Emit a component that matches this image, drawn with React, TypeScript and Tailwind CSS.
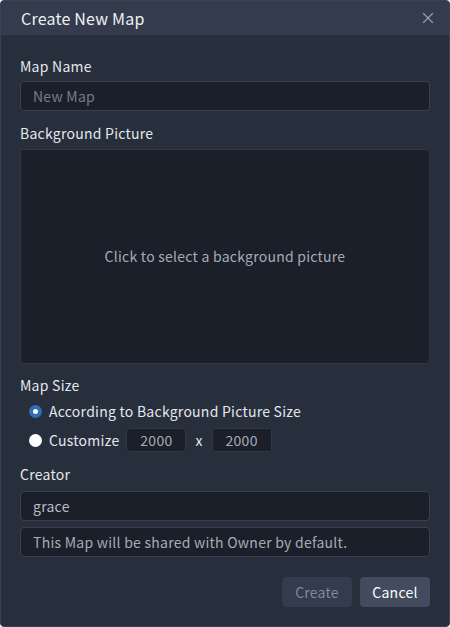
import { X } from "lucide-react";

const font = { fontFamily: '"Noto Sans CJK SC", "Noto Sans", sans-serif' };

function Radio({ checked }: { checked?: boolean }) {
  return checked ? (
    <span className="flex h-[13px] w-[13px] items-center justify-center rounded-full bg-[#2f6fb8]">
      <span className="h-[5px] w-[5px] rounded-full bg-white" />
    </span>
  ) : (
    <span className="h-[13px] w-[13px] rounded-full bg-white" />
  );
}

export default function App() {
  return (
    <div
      style={font}
      className="flex h-[627px] w-[450px] flex-col overflow-hidden rounded-[4px] border border-[#3a4151] bg-[#272e3c] text-[14px] tracking-[0.25px] text-[#e4e7ec]"
    >
      <div className="flex h-[34px] shrink-0 items-center justify-between bg-[#333b4d] pl-5 pr-[12px]">
        <span className="text-[16px] tracking-[0.2px] text-[#eef0f3]">Create New Map</span>
        <X className="h-[18px] w-[18px] text-[#9aa2ae]" strokeWidth={1.5} />
      </div>

      <div className="flex flex-1 flex-col px-[19px] pt-[21px]">
        <div className="h-5 leading-5">Map Name</div>
        <div className="mt-[5px] flex h-[30px] items-center rounded-[4px] border border-[#394050] bg-[#1b1f29] px-3 text-[#747d8b]">
          New Map
        </div>

        <div className="mt-[12px] h-5 leading-5">Background Picture</div>
        <div className="mt-[6px] flex h-[215px] items-center justify-center rounded-[4px] border border-[#2f3645] bg-[#1b1f29] text-[#a3acb9]">
          Click to select a background picture
        </div>

        <div className="mt-[11px] h-5 leading-5">Map Size</div>
        <div className="mt-[6px] flex h-5 items-center gap-[7px] pl-[9px]">
          <Radio checked />
          <span>According to Background Picture Size</span>
        </div>
        <div className="mt-[7px] flex h-6 items-center pl-[9px]">
          <Radio />
          <span className="ml-[7px]">Customize</span>
          <div className="ml-[7px] flex h-6 w-[60px] items-center justify-center rounded-[3px] border border-[#2f3645] bg-[#1b1f29] text-[#a3acb9]">
            2000
          </div>
          <span className="mx-[9px]">x</span>
          <div className="flex h-6 w-[60px] items-center justify-center rounded-[3px] border border-[#2f3645] bg-[#1b1f29] text-[#a3acb9]">
            2000
          </div>
        </div>

        <div className="mt-[12px] h-5 leading-5">Creator</div>
        <div className="mt-[7px] flex h-[30px] items-center rounded-[4px] border border-[#394050] bg-[#1b1f29] px-3 text-[#b6bdc8]">
          grace
        </div>
        <div className="mt-[6px] flex h-[30px] items-center rounded-[4px] border border-[#394050] bg-[#1b1f29] px-3 text-[#a3acb9]">
          This Map will be shared with Owner by default.
        </div>

        <div className="mt-[20px] flex justify-end gap-2">
          <button className="h-[30px] w-[70px] rounded-[4px] bg-[#333b4c] tracking-[0.25px] text-[#7f8a9a]">
            Create
          </button>
          <button className="h-[30px] w-[70px] rounded-[4px] bg-[#434c5e] tracking-[0.25px] text-white">
            Cancel
          </button>
        </div>
      </div>
    </div>
  );
}
